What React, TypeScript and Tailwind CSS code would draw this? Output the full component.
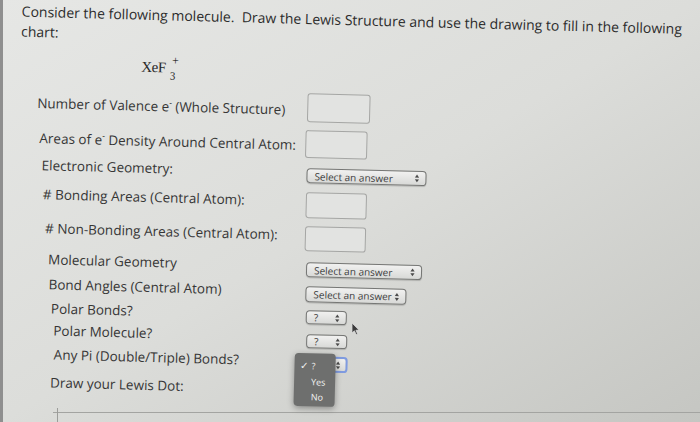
import React from "react";

function Arrows({ className = "" }: { className?: string }) {
  return (
    <svg width="5" height="9" viewBox="0 0 5 9" className={className}>
      <path d="M0.4 3.6 L2.5 0.6 L4.6 3.6Z" fill="currentColor" />
      <path d="M0.4 5.4 L2.5 8.4 L4.6 5.4Z" fill="currentColor" />
    </svg>
  );
}

function Box({ cls }: { cls: string }) {
  return <div className={`rounded-[3px] border border-[#a5a6a4] bg-[#e2e3e1] ${cls}`} />;
}

function Select({ text, cls }: { text: string; cls: string }) {
  return (
    <div
      className={`flex items-center justify-between rounded-[4px] border border-[#767775] bg-gradient-to-b from-[#f1f1f0] to-[#d8d9d7] pl-[7px] pr-[6px] text-[10px] leading-none text-[#3c3c3c] shadow-[0_1px_1px_rgba(0,0,0,0.18)] ${cls}`}
    >
      <span>{text}</span>
      <Arrows className="text-[#4a4a4a]" />
    </div>
  );
}

function OpenSelect() {
  return (
    <div className="relative h-[16px] w-[42px]">
      <div className="flex h-full w-full items-center justify-end rounded-[4px] border-2 border-[#7f9be0] bg-gradient-to-b from-[#f1f1f0] to-[#d8d9d7] pr-[5px] text-[#4a4a4a]">
        <Arrows />
      </div>
      {/* native menu popup */}
      <div className="absolute left-[-11px] top-[-3px] h-[53px] w-[41px] rounded-[4px] bg-[#6e6f6e] pt-[5px] text-[9px] leading-[15.5px] text-[#f2f2f2] shadow-[0_2px_6px_rgba(0,0,0,0.35)]">
        <div className="flex">
          <span className="w-[17px] pl-[6px] text-[10px]">✓</span>
          <span>?</span>
        </div>
        <div className="pl-[17px]">Yes</div>
        <div className="pl-[17px]">No</div>
      </div>
    </div>
  );
}

const E = () => (
  <>
    e<sup className="relative top-[-1px] text-[8px] align-super">-</sup>
  </>
);

const rows: {
  h: string;
  col: string;
  label: React.ReactNode;
  ctrl?: React.ReactNode;
  cmt?: string;
}[] = [
  {
    h: "h-[37px]",
    col: "w-[310px] pl-[40px] pt-[7px]",
    label: (
      <>
        Number of Valence <E /> (Whole Structure)
      </>
    ),
    ctrl: <Box cls="w-[63px] h-[29px]" />,
  },
  {
    h: "h-[32px]",
    col: "w-[309px] pl-[43px] pt-[5px]",
    label: (
      <>
        Areas of <E /> Density Around Central Atom:
      </>
    ),
    ctrl: <Box cls="w-[62px] h-[28px]" />,
  },
  {
    h: "h-[29px]",
    col: "w-[311px] pl-[46px]",
    label: "Electronic Geometry:",
    ctrl: <Select text="Select an answer" cls="w-[120px] h-[15px]" />,
    cmt: "mt-[6px]",
  },
  {
    h: "h-[34px]",
    col: "w-[311px] pl-[48px]",
    label: "# Bonding Areas (Central Atom):",
    ctrl: <Box cls="w-[61px] h-[26px]" />,
    cmt: "mt-[1px]",
  },
  {
    h: "h-[31px]",
    col: "w-[311px] pl-[51px]",
    label: "# Non-Bonding Areas (Central Atom):",
    ctrl: <Box cls="w-[61px] h-[25px]" />,
    cmt: "mt-[1px]",
  },
  {
    h: "h-[25px]",
    col: "w-[313px] pl-[55px]",
    label: "Molecular Geometry",
    ctrl: <Select text="Select an answer" cls="w-[116px] h-[15px]" />,
    cmt: "mt-[6px]",
  },
  {
    h: "h-[24px]",
    col: "w-[313px] pl-[56px]",
    label: "Bond Angles (Central Atom)",
    ctrl: <Select text="Select an answer" cls="w-[101px] h-[16px]" />,
    cmt: "mt-[5px]",
  },
  {
    h: "h-[22px]",
    col: "w-[314px] pl-[59px]",
    label: "Polar Bonds?",
    ctrl: <Select text="?" cls="w-[41px] h-[14px]" />,
    cmt: "mt-[5px]",
  },
  {
    h: "h-[24px]",
    col: "w-[315px] pl-[62px]",
    label: "Polar Molecule?",
    ctrl: <Select text="?" cls="w-[41px] h-[14px]" />,
    cmt: "mt-[7px]",
  },
  {
    h: "h-[28px]",
    col: "w-[315px] pl-[63px]",
    label: "Any Pi (Double/Triple) Bonds?",
    ctrl: <OpenSelect />,
    cmt: "mt-[5px]",
  },
  {
    h: "h-[20px]",
    col: "w-[315px] pl-[60px]",
    label: "Draw your Lewis Dot:",
  },
];

export default function App() {
  return (
    <div
      className="relative h-[422px] w-[700px] overflow-hidden bg-gradient-to-br from-[#e6e7e5] via-[#dcddda] to-[#c5c6c2] shadow-[inset_3px_0_0_#8f8f8f]"
      style={{ fontFamily: '"Open Sans", "Noto Sans", sans-serif' }}
    >
      {/* photo of screen is slightly tilted */}
      <div className="h-[412px] origin-top-left rotate-[1.5deg]">
        <p className="w-[690px] pl-[22px] pt-[1px] text-[14px] leading-[20px] text-[#2b2b2b]">
          Consider the following molecule.&nbsp; Draw the Lewis Structure and use the drawing to fill in the following chart:
        </p>

        <div
          className="ml-[143px] mt-[13px] flex h-[31px] items-start text-[15px] leading-[18px] text-[#2a2a2a]"
          style={{ fontFamily: '"Liberation Serif", "DejaVu Serif", serif' }}
        >
          <span className="tracking-[-0.4px]">XeF</span>
          <span className="ml-[1px] mt-[-4px] flex flex-col items-center">
            <span className="ml-[5px] text-[12px] leading-[12px]">+</span>
            <span className="mt-[3px] text-[11px] leading-[12px]">3</span>
          </span>
        </div>

        <div className="text-[13.5px] leading-[20px] text-[#363636]">
          {rows.map((r, i) => (
            <div key={i} className={`flex items-start ${r.h}`}>
              <div className={`shrink-0 whitespace-nowrap ${r.col}`}>{r.label}</div>
              {r.ctrl && <div className={r.cmt ?? ""}>{r.ctrl}</div>}
            </div>
          ))}
        </div>
      </div>

      {/* top edge of the drawing area */}
      <div className="ml-[53px] border-t border-[#a3a4a1]">
        <div className="ml-[4px] mt-[-5px] h-[14px] w-px bg-[#9c9d9a]" />
      </div>

      {/* mouse pointer */}
      <svg
        width="9"
        height="14"
        viewBox="0 0 9 14"
        className="absolute left-[351px] top-[322px]"
      >
        <path
          d="M1 1 L1 11 L3.4 8.8 L5.2 12.6 L6.6 12 L4.9 8.3 L8 8.1 Z"
          fill="#3a3a3a"
          stroke="#d8d8d8"
          strokeWidth="0.8"
        />
      </svg>
    </div>
  );
}
